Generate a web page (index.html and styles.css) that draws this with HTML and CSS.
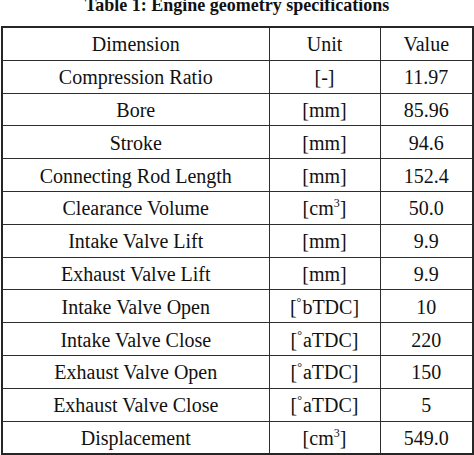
FILE: index.html
```html
<!DOCTYPE html>
<html>
<head>
<meta charset="utf-8">
<link rel="stylesheet" href="styles.css">
</head>
<body>
<div class="title">Table 1: Engine geometry specifications</div>
<table class="spec">
  <colgroup>
    <col class="c1">
    <col class="c2">
    <col class="c3">
  </colgroup>
  <tr><td>Dimension</td><td>Unit</td><td>Value</td></tr>
  <tr><td>Compression Ratio</td><td>[-]</td><td>11.97</td></tr>
  <tr><td>Bore</td><td>[mm]</td><td>85.96</td></tr>
  <tr><td>Stroke</td><td>[mm]</td><td>94.6</td></tr>
  <tr><td>Connecting Rod Length</td><td>[mm]</td><td>152.4</td></tr>
  <tr><td>Clearance Volume</td><td>[cm<sup class="sup">3</sup>]</td><td>50.0</td></tr>
  <tr><td>Intake Valve Lift</td><td>[mm]</td><td>9.9</td></tr>
  <tr><td>Exhaust Valve Lift</td><td>[mm]</td><td>9.9</td></tr>
  <tr><td>Intake Valve Open</td><td>[<span class="deg">°</span>bTDC]</td><td>10</td></tr>
  <tr><td>Intake Valve Close</td><td>[<span class="deg">°</span>aTDC]</td><td>220</td></tr>
  <tr><td>Exhaust Valve Open</td><td>[<span class="deg">°</span>aTDC]</td><td>150</td></tr>
  <tr><td>Exhaust Valve Close</td><td>[<span class="deg">°</span>aTDC]</td><td>5</td></tr>
  <tr><td>Displacement</td><td>[cm<sup class="sup">3</sup>]</td><td>549.0</td></tr>
</table>
</body>
</html>
```

FILE: styles.css
```css
html, body {
  margin: 0;
  padding: 0;
  background: #ffffff;
}
body {
  font-family: "Liberation Serif", "Times New Roman", serif;
  color: #111111;
  width: 474px;
  height: 455px;
  overflow: hidden;
}
.title {
  font-size: 18px;
  font-weight: bold;
  line-height: 18px;
  text-align: center;
  margin-top: -4px;
  margin-bottom: 12px;
}
.spec {
  border-collapse: collapse;
  table-layout: fixed;
  margin-left: 1px;
  width: 471px;
  border: 2px solid #262626;
}
.c1 { width: 267px; }
.c2 { width: 111px; }
.c3 { width: 93px; }
.spec td {
  border: 1px solid #2e2e2e;
  height: 30.8px;
  padding: 1px 0 0 0;
  text-align: center;
  vertical-align: middle;
  font-size: 20px;
  line-height: 22px;
  white-space: nowrap;
}
.sup {
  font-size: 12px;
  line-height: 0;
  vertical-align: 8px;
}
.deg {
  font-size: 12px;
  line-height: 0;
  vertical-align: 8px;
  margin-right: 1px;
}
```
